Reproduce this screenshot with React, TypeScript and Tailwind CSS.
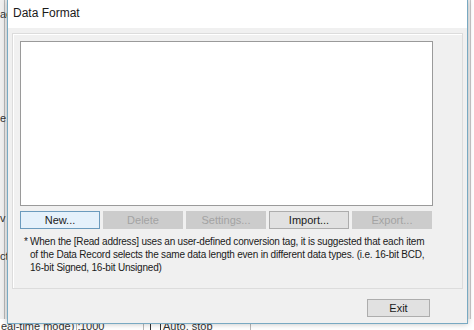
import React from "react";

const font = { fontFamily: '"Liberation Sans", Arial, sans-serif' };

type Btn = { label: string; disabled?: boolean; focused?: boolean };

const buttons: Btn[] = [
  { label: "New...", focused: true },
  { label: "Delete", disabled: true },
  { label: "Settings...", disabled: true },
  { label: "Import..." },
  { label: "Export...", disabled: true },
];

const noteLines = [
  "When the [Read address] uses an user-defined conversion tag, it is suggested that each item",
  "of the Data Record selects the same data length even in different data types. (i.e. 16-bit BCD,",
  "16-bit Signed, 16-bit Unsigned)",
];

function WinButton({ label, disabled, focused }: Btn) {
  let cls = "border-[#adadad] bg-[#e1e1e1] text-[#1a1a1a]";
  if (disabled) cls = "border-[#cccccc] bg-[#cccccc] text-[#a3a3a3]";
  if (focused) cls = "border-[#6c9bbd] bg-[#e5f1fb] text-[#1a1a1a]";
  return (
    <div className={`h-[18px] w-[80px] border flex items-center justify-center text-[11px] leading-none ${cls}`}>
      {label}
    </div>
  );
}

export default function App() {
  return (
    <div className="relative w-[474px] h-[330px] overflow-hidden bg-[#f0f0f0]" style={font}>
      {/* background app, mostly covered */}
      <div className="absolute left-0 top-0 h-full w-[5px] border-r border-[#b9b9b9]" />
      <div className="absolute left-0 top-[6px] text-[11px] text-[#333]">ac</div>
      <div className="absolute left-0 top-[110px] text-[11px] text-[#333]">e</div>
      <div className="absolute left-0 top-[210px] text-[11px] text-[#333]">v</div>
      <div className="absolute left-0 top-[248px] text-[11px] text-[#333]">ct</div>
      <div className="absolute right-0 top-0 h-full w-[4px] bg-white border-l border-[#c8c8c8]" />
      <div className="absolute left-0 bottom-0 w-full h-[11px] bg-white flex items-start text-[11px] text-[#333] leading-none">
        <span className="pl-[1px] pt-[2px] w-[76px] whitespace-nowrap">eal-time mode) :</span>
        <span className="h-full w-[68px] border-x border-[#b9b9b9] pl-[3px] pt-[2px]">1000</span>
        <span className="ml-[6px] mt-[2px] w-[11px] h-[11px] border border-[#333] bg-white" />
        <span className="pl-[2px] pt-[2px] w-[90px] border-r border-[#b9b9b9] h-full whitespace-nowrap">Auto. stop</span>
      </div>

      {/* dialog */}
      <div className="absolute left-[7px] top-0 w-[461px] h-[324px] border-x border-b border-[#78a9c2] bg-[#f0f0f0] flex flex-col shadow-[0_0_6px_rgba(0,0,0,0.25)]">
        <div className="h-[28px] bg-white flex items-center pl-[5px] pb-[2px] text-[12px] text-[#1a1a1a]">
          Data Format
        </div>
        <div className="px-[4px] pt-[5px]">
          <div className="h-[256px] border border-[#dcdcdc] shadow-[inset_1px_1px_0_#ffffff] pl-[7px] pt-[7px] flex flex-col">
            <div className="h-[165px] w-[413px] bg-white border border-[#9a9a9a]" />
            <div className="mt-[5px] flex gap-[3px]">
              {buttons.map((b) => (
                <WinButton key={b.label} {...b} />
              ))}
            </div>
            <div className="mt-[6px] pl-[4px] flex text-[10px] tracking-[-0.2px] leading-[13px] text-[#1a1a1a]">
              <span className="w-[6px] shrink-0">*</span>
              <div>
                {noteLines.map((l) => (
                  <div key={l} className="whitespace-nowrap">{l}</div>
                ))}
              </div>
            </div>
          </div>
        </div>
        <div className="flex justify-end pr-[37px] pt-[10px]">
          <div className="h-[18px] w-[63px] border border-[#adadad] bg-[#e1e1e1] flex items-center justify-center text-[11px] leading-none text-[#1a1a1a]">
            Exit
          </div>
        </div>
      </div>
    </div>
  );
}
